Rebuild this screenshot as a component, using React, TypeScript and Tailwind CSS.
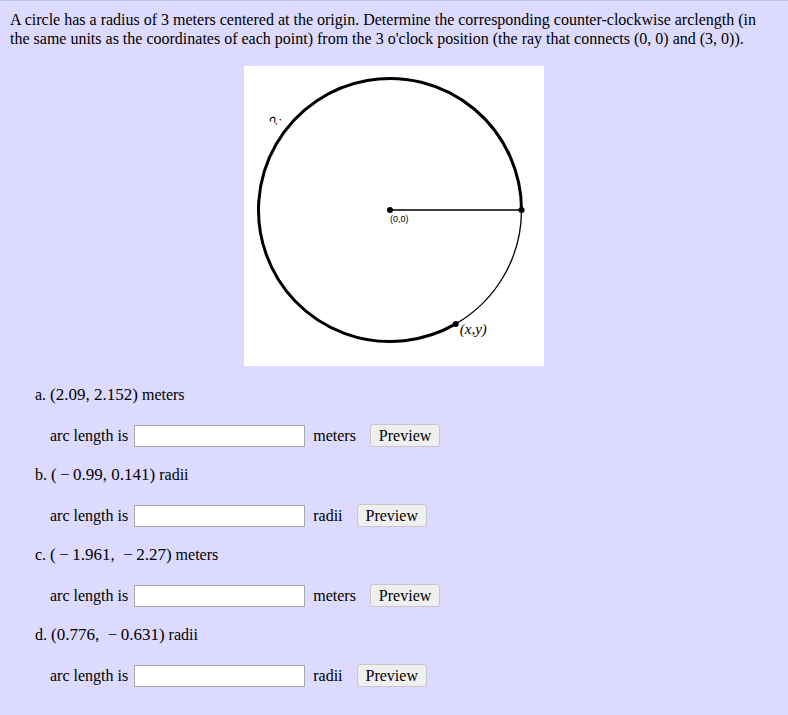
import React from 'react';

type Part = { letter: string; point: React.ReactNode; unit: string };

const parts: Part[] = [
  { letter: 'a.', point: <>(2.09, 2.152)</>, unit: 'meters' },
  { letter: 'b.', point: <>(&thinsp;&minus;&thinsp;0.99, 0.141)</>, unit: 'radii' },
  { letter: 'c.', point: <>(&thinsp;&minus;&thinsp;1.961, &nbsp;&minus;&thinsp;2.27)</>, unit: 'meters' },
  { letter: 'd.', point: <>(0.776, &nbsp;&minus;&thinsp;0.631)</>, unit: 'radii' },
];

const CircleFigure = () => {
  const cx = 146;
  const cy = 144;
  const r = 131.5;
  const ax = cx + r;
  const px = cx + r * Math.cos(Math.PI / 3);
  const py = cy + r * Math.sin(Math.PI / 3);
  return (
    <svg width="300" height="300" viewBox="0 0 300 300" className="block bg-white">
      <path d={`M ${ax} ${cy} A ${r} ${r} 0 1 0 ${px} ${py}`} fill="none" stroke="black" strokeWidth="3" />
      <path d={`M ${ax} ${cy} A ${r} ${r} 0 0 1 ${px} ${py}`} fill="none" stroke="black" strokeWidth="1.3" />
      <line x1={cx} y1={cy} x2={ax} y2={cy} stroke="black" strokeWidth="1.6" />
      <circle cx={cx} cy={cy} r="3" fill="black" />
      <circle cx={ax} cy={cy} r="3" fill="black" />
      <circle cx={px} cy={py} r="3" fill="black" />
      <text x={cx} y={cy + 12} fontSize="9" fontFamily="'Liberation Sans', Arial, sans-serif">(0,0)</text>
      <text x={px + 4} y={py + 10} fontSize="15" fontStyle="italic" fontFamily="'Liberation Serif', 'Times New Roman', serif">
        (x,y)
      </text>
      <text x="26" y="60" fontSize="13" transform="rotate(-45 29 55)" fontFamily="'Liberation Sans', Arial, sans-serif">
        ?.
      </text>
    </svg>
  );
};

export default function App() {
  return (
    <div
      className="min-h-[715px] w-full bg-[#dcdaff] border-t border-[#c4c2e0] text-black text-[16px] leading-[19px]"
      style={{ fontFamily: "'Liberation Serif', 'Times New Roman', serif" }}
    >
      <p className="pl-[10px] pr-[10px] pt-[9px]">
        A circle has a radius of 3 meters centered at the origin. Determine the corresponding counter-clockwise arclength (in
        the same units as the coordinates of each point) from the 3 o'clock position (the ray that connects (0, 0) and (3, 0)).
      </p>
      <div className="flex justify-center mt-[18px]">
        <CircleFigure />
      </div>
      <div className="mt-[19px] pl-[35px]">
        {parts.map((p) => (
          <div key={p.letter} className="mb-[18px]">
            <div className="h-[19px] whitespace-nowrap">
              {p.letter} <span className="text-[17px]">{p.point}</span> {p.unit}
            </div>
            <div className="mt-[20px] h-[23px] pl-[15px] flex items-center">
              <span>arc length is</span>
              <input
                type="text"
                className="ml-[6px] w-[171px] h-[22px] bg-white border border-[#a9a9a9] outline-none px-1"
              />
              <span className="ml-[8px]">{p.unit}</span>
              <button className="ml-[14px] h-[23px] px-[8px] bg-[#efefef] border border-[#c6c6c6] rounded-[3px] text-[16px] leading-[19px]">
                Preview
              </button>
            </div>
          </div>
        ))}
      </div>
    </div>
  );
}
